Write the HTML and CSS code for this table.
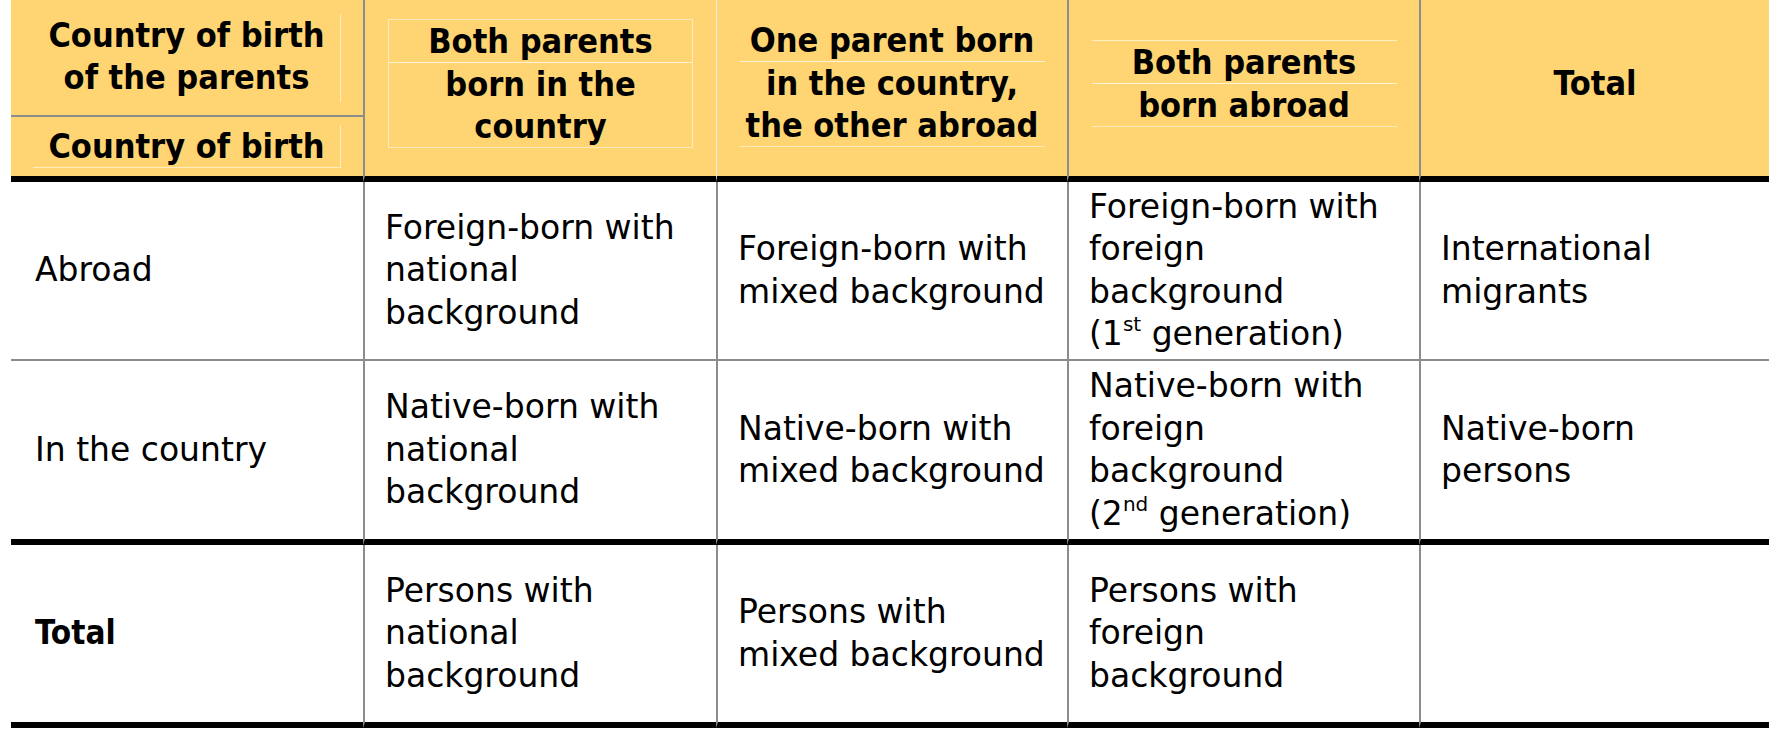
FILE: index.html
```html
<!DOCTYPE html>
<html lang="en">
<head>
<meta charset="utf-8">
<title>Country of birth and background</title>
<link rel="stylesheet" href="styles.css">
</head>
<body>
<div class="page">
  <table class="grid">
    <colgroup>
      <col class="c1"><col class="c2"><col class="c3"><col class="c4"><col class="c5">
    </colgroup>
    <thead>
      <tr>
        <th class="corner">
          <div class="corner-top">
            <div class="corner-box">Country of birth<br>of the parents</div>
          </div>
          <div class="corner-bottom">
            <div class="corner-box low">Country of birth</div>
          </div>
        </th>
        <th class="head">
          <div class="hbox boxed">
            <div class="hline sep">Both parents</div>
            <div class="hline">born in the</div>
            <div class="hline">country</div>
          </div>
        </th>
        <th class="head">
          <div class="hbox bottom-line">
            <div class="hline sep">One parent born</div>
            <div class="hline">in the country,</div>
            <div class="hline">the other abroad</div>
          </div>
        </th>
        <th class="head">
          <div class="hbox top-line bottom-line">
            <div class="hline sep">Both parents</div>
            <div class="hline">born abroad</div>
          </div>
        </th>
        <th class="head">
          <div class="hbox">
            <div class="hline">Total</div>
          </div>
        </th>
      </tr>
    </thead>
    <tbody>
      <tr class="r1">
        <td class="label">Abroad</td>
        <td>Foreign-born with<br>national<br>background</td>
        <td>Foreign-born with<br>mixed background</td>
        <td>Foreign-born with<br>foreign<br>background<br>(1<sup>st</sup> generation)</td>
        <td>International<br>migrants</td>
      </tr>
      <tr class="r2">
        <td class="label">In the country</td>
        <td>Native-born with<br>national<br>background</td>
        <td>Native-born with<br>mixed background</td>
        <td>Native-born with<br>foreign<br>background<br>(2<sup>nd</sup> generation)</td>
        <td>Native-born<br>persons</td>
      </tr>
      <tr class="r3">
        <td class="label strong">Total</td>
        <td>Persons with<br>national<br>background</td>
        <td>Persons with<br>mixed background</td>
        <td>Persons with<br>foreign<br>background</td>
        <td></td>
      </tr>
    </tbody>
  </table>
</div>
</body>
</html>
```

FILE: styles.css
```css
html, body {
  margin: 0;
  padding: 0;
  background: #ffffff;
}

body {
  font-family: "DejaVu Sans", "Liberation Sans", sans-serif;
  color: #000000;
}

.page {
  padding-left: 11px;
}

.grid {
  border-collapse: separate;
  border-spacing: 0;
  table-layout: fixed;
  width: 1758px;
}

.c1 { width: 352px; }
.c2 { width: 353px; }
.c3 { width: 351px; }
.c4 { width: 352px; }
.c5 { width: 350px; }

/* ---------- header ---------- */
.grid th {
  background: #fed572;
  padding: 0;
  height: 176px;
  border-bottom: 6px solid #000000;
  font-family: "DejaVu Sans Condensed", "DejaVu Sans", sans-serif;
  font-stretch: condensed;
  font-weight: bold;
  font-size: 34px;
  line-height: 42px;
  text-align: center;
}

.grid th + th {
  border-left: 2px solid #8c8c8c;
}

.grid th.head {
  vertical-align: middle;
  padding-bottom: 10px;
  height: 166px;
}

.grid th.head + th.head {
  border-left: 1px solid #f3efe4;
}

.grid th.head + th.head + th.head {
  border-left: 2px solid #8c8c8c;
}

.corner {
  vertical-align: top;
}

.corner-top {
  height: 115px;
  border-bottom: 2px solid #8c8c8c;
  display: flex;
  align-items: center;
  justify-content: center;
}

.corner-bottom {
  height: 59px;
  display: flex;
  align-items: center;
  justify-content: center;
}

.corner-box {
  width: 308px;
  box-sizing: border-box;
  border-right: 1px solid rgba(255, 255, 255, 0.55);
  padding-bottom: 4px;
}

.corner-box.low {
  padding-bottom: 0;
  border-bottom: 1px solid rgba(255, 255, 255, 0.55);
}

.hbox {
  width: 305px;
  margin: 0 auto;
  box-sizing: border-box;
}

.hbox.boxed {
  border: 1px solid rgba(255, 255, 255, 0.5);
}

.hbox.top-line {
  border-top: 1px solid rgba(255, 255, 255, 0.6);
}

.hbox.bottom-line {
  border-bottom: 1px solid rgba(255, 255, 255, 0.5);
}

.hline.sep {
  border-bottom: 1px solid rgba(255, 255, 255, 0.7);
}

/* ---------- body ---------- */
.grid td {
  padding: 0 16px 0 20px;
  vertical-align: middle;
  font-size: 33px;
  line-height: 42.5px;
}

.grid td + td {
  border-left: 2px solid #8c8c8c;
}

.grid td.label {
  padding-left: 24px;
}

.grid td.strong {
  font-weight: bold;
  font-family: "DejaVu Sans Condensed", "DejaVu Sans", sans-serif;
  font-stretch: condensed;
}

.r1 td {
  height: 177px;
  border-bottom: 2px solid #8c8c8c;
}

.r2 td {
  height: 178px;
  border-bottom: 6px solid #000000;
}

.r3 td {
  height: 177px;
  border-bottom: 6px solid #000000;
}

sup {
  font-size: 20px;
  line-height: 0;
  vertical-align: 14px;
}
```
